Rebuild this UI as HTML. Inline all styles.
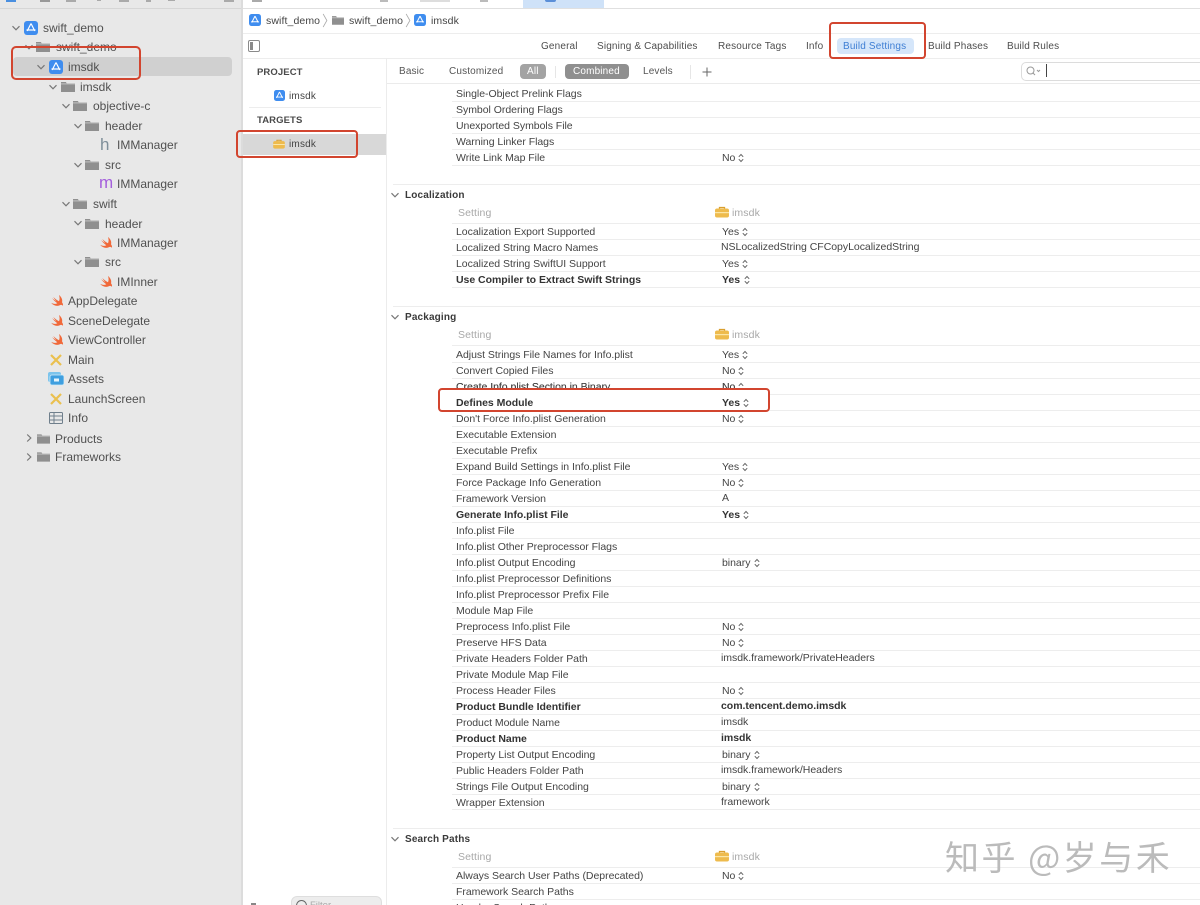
<!DOCTYPE html>
<html lang="zh">
<head>
<meta charset="utf-8">
<title>swift_demo</title>
<style>
html,body{margin:0;padding:0;background:#fff}
#p{position:relative;width:1200px;height:905px;overflow:hidden;background:#fff;font-family:"Liberation Sans","Noto Sans CJK SC",sans-serif;color:#3a3a3a}
#p div,#p span,#p svg{position:absolute}
.t,.v,.s,.n,.b{white-space:nowrap;line-height:14px;height:14px}
.s{left:456px;font-size:10.5px;letter-spacing:-.03px;color:#444}
.v{left:722px;font-size:10.5px;letter-spacing:-.03px;color:#444}
.b{font-weight:bold;color:#333}
.n{font-size:12px;letter-spacing:0;color:#505050}
.l{left:452px;right:0;height:1px;background:#ededed}
.h{left:405px;font-size:10px;font-weight:bold;letter-spacing:.15px;color:#3a3a3a;white-space:nowrap;line-height:14px}
.g{left:458px;font-size:10.5px;letter-spacing:.1px;color:#a8a8a8;line-height:14px}
.g2{left:732px;font-size:10.5px;letter-spacing:.1px;color:#a8a8a8;line-height:14px}
.tab{font-size:10px;letter-spacing:.15px;color:#4d4d4d;line-height:14px;white-space:nowrap}
.red{border:2.5px solid #d2452f;border-radius:4px;box-sizing:border-box}
.cap{font-size:9.5px;font-weight:bold;letter-spacing:.1px;color:#4a4a4a}
</style>
</head>
<body>
<div id="p">
<svg width="0" height="0" style="left:0;top:0">
<defs>
<symbol id="app" viewBox="0 0 14 14"><rect width="14" height="14" rx="3" fill="#3f8def"/><path d="M7 2.500 3.200 10M7 2.500 10.800 10M2.500 9h9" stroke="#fff" stroke-width="1.200" fill="none"/></symbol>
<symbol id="fo" viewBox="0 0 14 11"><path d="M0 1h4.800l1 1.400H14V11H0z" fill="#8f8f8f"/><rect x="0" y="2.400" width="14" height="1" fill="#c4c4c4"/></symbol>
<symbol id="sw" viewBox="0 0 14 14"><path d="M9 1C11.500 3 12.800 5.800 12 8.300C13 9.500 13.300 11 12.800 11.800C12 10.800 10.800 10.700 9.800 11.200C7 12.500 3.500 11.800 1 8.800C3 10 5.500 10.200 7.300 9.200C5.200 7.800 3.300 5.800 2 4C3.500 5.300 5.300 6.600 6.500 7.300C5 5.800 4 4.300 3.300 3C5 4.700 7.300 6.500 9 7.300C9.800 5.500 9.800 3.300 9 1Z" fill="#f0693a"/></symbol>
<symbol id="xx" viewBox="0 0 14 14"><path d="M2 2 12 12M12 2 2 12" stroke="#eac04e" stroke-width="2.200" fill="none"/></symbol>
<symbol id="cd" viewBox="0 0 10 10"><path d="M1.500 3.200 5 6.800 8.500 3.200" stroke="#777" stroke-width="1.200" fill="none"/></symbol>
<symbol id="cr" viewBox="0 0 10 10"><path d="M3.200 1.500 6.800 5 3.200 8.500" stroke="#777" stroke-width="1.200" fill="none"/></symbol>
<symbol id="tb" viewBox="0 0 14 12"><path d="M4.500 3V1.500h5V3" stroke="#d99f2f" stroke-width="1.300" fill="none"/><rect y="2.500" width="14" height="9" rx="2" fill="#eebb4d"/><rect y="6" width="14" height="1.200" fill="#fbe6a8"/></symbol>
<symbol id="ud" viewBox="0 0 6 10"><path d="M.8 3.800 3 1.500 5.200 3.800M.8 6.200 3 8.500 5.200 6.200" stroke="#666" stroke-width="1" fill="none"/></symbol>
<symbol id="br" viewBox="0 0 6 16"><path d="M1 1 5 8 1 15" stroke="#aaa" stroke-width=".9" fill="none"/></symbol>
</defs>
</svg>

<!-- sidebar -->
<div style="left:0;top:0;width:241px;height:905px;background:#e8e8e8"></div>
<div style="left:241px;top:0;width:2px;height:905px;background:#dcdcdc"></div>
<div style="left:0;top:8px;width:241px;height:1px;background:#d6d6d6"></div>
<div style="left:6px;top:0;width:10px;height:2px;background:#4a8fe0"></div>
<div style="left:40px;top:0;width:10px;height:2px;background:#999"></div>
<div style="left:66px;top:0;width:10px;height:2px;background:#aaa"></div>
<div style="left:97px;top:0;width:4px;height:1px;background:#aaa"></div>
<div style="left:119px;top:0;width:10px;height:2px;background:#aaa"></div>
<div style="left:146px;top:0;width:5px;height:2px;background:#aaa"></div>
<div style="left:168px;top:0;width:7px;height:1px;background:#aaa"></div>
<div style="left:224px;top:0;width:10px;height:2px;background:#aaa"></div>

<div style="left:13px;top:57px;width:219px;height:19px;background:#d0d0d0;border-radius:4px"></div>

<svg style="left:11px;top:23px" width="10" height="10"><use href="#cd"/></svg>
<svg style="left:24px;top:21px" width="14" height="14"><use href="#app"/></svg>
<div class="n" style="left:43px;top:21px">swift_demo</div>

<svg style="left:24px;top:42px" width="10" height="10"><use href="#cd"/></svg>
<svg style="left:36px;top:41px" width="14" height="11"><use href="#fo"/></svg>
<div class="n" style="left:56px;top:40px">swift_demo</div>

<svg style="left:36px;top:62px" width="10" height="10"><use href="#cd"/></svg>
<svg style="left:49px;top:60px" width="14" height="14"><use href="#app"/></svg>
<div class="n" style="left:68px;top:60px">imsdk</div>

<svg style="left:48px;top:82px" width="10" height="10"><use href="#cd"/></svg>
<svg style="left:61px;top:81px" width="14" height="11"><use href="#fo"/></svg>
<div class="n" style="left:80px;top:80px">imsdk</div>

<svg style="left:61px;top:101px" width="10" height="10"><use href="#cd"/></svg>
<svg style="left:73px;top:100px" width="14" height="11"><use href="#fo"/></svg>
<div class="n" style="left:93px;top:99px">objective-c</div>

<svg style="left:73px;top:121px" width="10" height="10"><use href="#cd"/></svg>
<svg style="left:85px;top:120px" width="14" height="11"><use href="#fo"/></svg>
<div class="n" style="left:105px;top:119px">header</div>

<div style="left:100px;top:136px;font-size:17px;line-height:18px;color:#7f8f9a">h</div>
<div class="n" style="left:117px;top:138px">IMManager</div>

<svg style="left:73px;top:160px" width="10" height="10"><use href="#cd"/></svg>
<svg style="left:85px;top:159px" width="14" height="11"><use href="#fo"/></svg>
<div class="n" style="left:105px;top:158px">src</div>

<div style="left:99px;top:174px;font-size:17px;line-height:18px;color:#a45fdc">m</div>
<div class="n" style="left:117px;top:177px">IMManager</div>

<svg style="left:61px;top:199px" width="10" height="10"><use href="#cd"/></svg>
<svg style="left:73px;top:198px" width="14" height="11"><use href="#fo"/></svg>
<div class="n" style="left:93px;top:197px">swift</div>

<svg style="left:73px;top:218px" width="10" height="10"><use href="#cd"/></svg>
<svg style="left:85px;top:218px" width="14" height="11"><use href="#fo"/></svg>
<div class="n" style="left:105px;top:217px">header</div>

<svg style="left:99px;top:236px" width="14" height="14"><use href="#sw"/></svg>
<div class="n" style="left:117px;top:236px">IMManager</div>

<svg style="left:73px;top:257px" width="10" height="10"><use href="#cd"/></svg>
<svg style="left:85px;top:256px" width="14" height="11"><use href="#fo"/></svg>
<div class="n" style="left:105px;top:255px">src</div>

<svg style="left:99px;top:275px" width="14" height="14"><use href="#sw"/></svg>
<div class="n" style="left:117px;top:275px">IMInner</div>

<svg style="left:50px;top:294px" width="14" height="14"><use href="#sw"/></svg>
<div class="n" style="left:68px;top:294px">AppDelegate</div>
<svg style="left:50px;top:314px" width="14" height="14"><use href="#sw"/></svg>
<div class="n" style="left:68px;top:314px">SceneDelegate</div>
<svg style="left:50px;top:333px" width="14" height="14"><use href="#sw"/></svg>
<div class="n" style="left:68px;top:333px">ViewController</div>
<svg style="left:49px;top:353px" width="14" height="14"><use href="#xx"/></svg>
<div class="n" style="left:68px;top:353px">Main</div>
<svg style="left:48px;top:372px" width="16" height="14" viewBox="0 0 16 14"><rect x="0" y="0" width="13" height="10" rx="2" fill="#7cc4ec"/><rect x="2" y="3" width="14" height="10" rx="2" fill="#3f9fdf" stroke="#cfeaf8" stroke-width=".8"/><rect x="6" y="6.500" width="5" height="3" fill="#e6f4fb"/></svg>
<div class="n" style="left:68px;top:372px">Assets</div>
<svg style="left:49px;top:392px" width="14" height="14"><use href="#xx"/></svg>
<div class="n" style="left:68px;top:392px">LaunchScreen</div>
<svg style="left:49px;top:412px" width="14" height="12" viewBox="0 0 14 12"><rect x=".5" y=".5" width="13" height="11" rx="1" fill="none" stroke="#6f7f8c"/><path d="M.5 4h13M.5 8h13M5 .5v11" stroke="#6f7f8c" fill="none"/></svg>
<div class="n" style="left:68px;top:411px">Info</div>
<svg style="left:24px;top:433px" width="10" height="10"><use href="#cr"/></svg>
<svg style="left:37px;top:433px" width="13" height="11"><use href="#fo"/></svg>
<div class="n" style="left:55px;top:432px">Products</div>
<svg style="left:24px;top:452px" width="10" height="10"><use href="#cr"/></svg>
<svg style="left:37px;top:451px" width="13" height="11"><use href="#fo"/></svg>
<div class="n" style="left:55px;top:450px">Frameworks</div>

<!-- top strips -->
<div style="left:243px;top:8px;right:0;height:1px;background:#e0e0e0"></div>
<div style="left:523px;top:0;width:81px;height:8px;background:#cfe2f8"></div>
<div style="left:545px;top:0;width:11px;height:2px;background:#5b8fd8;border-radius:0 0 2px 2px"></div>
<div style="left:252px;top:0;width:10px;height:2px;background:#aaa"></div>
<div style="left:380px;top:0;width:8px;height:2px;background:#bbb"></div>
<div style="left:420px;top:0;width:30px;height:2px;background:#ddd"></div>
<div style="left:480px;top:0;width:8px;height:2px;background:#bbb"></div>

<!-- breadcrumb -->
<svg style="left:249px;top:14px" width="12" height="12"><use href="#app"/></svg>
<div class="t" style="left:266px;top:14px;font-size:10.5px;letter-spacing:.1px;color:#444">swift_demo</div>
<svg style="left:322px;top:13px" width="6" height="15"><use href="#br"/></svg>
<svg style="left:332px;top:15px" width="12" height="10"><use href="#fo"/></svg>
<div class="t" style="left:349px;top:14px;font-size:10.5px;letter-spacing:.1px;color:#444">swift_demo</div>
<svg style="left:405px;top:13px" width="6" height="15"><use href="#br"/></svg>
<svg style="left:414px;top:14px" width="12" height="12"><use href="#app"/></svg>
<div class="t" style="left:431px;top:14px;font-size:10.5px;letter-spacing:.1px;color:#444">imsdk</div>
<div style="left:243px;top:33px;right:0;height:1px;background:#ededed"></div>

<!-- tab bar -->
<div style="left:248px;top:40px;width:10px;height:10px;border:1px solid #8a8a8a;border-radius:2px"></div>
<div style="left:250px;top:42px;width:3px;height:8px;background:#8a8a8a"></div>
<div class="tab" style="left:541px;top:40px">General</div>
<div class="tab" style="left:597px;top:40px">Signing &amp; Capabilities</div>
<div class="tab" style="left:718px;top:40px">Resource Tags</div>
<div class="tab" style="left:806px;top:40px">Info</div>
<div style="left:837px;top:38px;width:77px;height:16px;background:#d5e6fa;border-radius:4px"></div>
<div class="tab" style="left:843px;top:40px;color:#3f7fd4">Build Settings</div>
<div class="tab" style="left:928px;top:40px">Build Phases</div>
<div class="tab" style="left:1007px;top:40px">Build Rules</div>
<div style="left:243px;top:58px;right:0;height:1px;background:#ededed"></div>

<!-- project pane -->
<div style="left:386px;top:58px;width:1px;height:847px;background:#ececec"></div>
<div class="t cap" style="left:257px;top:66px">PROJECT</div>
<svg style="left:274px;top:90px" width="11" height="11"><use href="#app"/></svg>
<div class="t" style="left:289px;top:90px;font-size:10px;letter-spacing:.2px;color:#444">imsdk</div>
<div style="left:249px;top:107px;width:132px;height:1px;background:#ededed"></div>
<div class="t cap" style="left:257px;top:114px">TARGETS</div>
<div style="left:243px;top:134px;width:143px;height:21px;background:#d8d8d8"></div>
<svg style="left:273px;top:139px" width="12" height="10"><use href="#tb"/></svg>
<div class="t" style="left:289px;top:138px;font-size:10px;letter-spacing:.2px;color:#444">imsdk</div>
<div style="left:251px;top:903px;width:5px;height:2px;background:#888"></div>
<div style="left:291px;top:896px;width:89px;height:12px;background:#ededed;border:1px solid #dedede;border-radius:6px"></div>
<div style="left:296px;top:900px;width:9px;height:9px;border:1px solid #666;border-radius:50%"></div>
<div class="t" style="left:310px;top:899px;font-size:9.5px;color:#aaa">Filter</div>

<!-- filter bar -->
<div class="tab" style="left:399px;top:65px;color:#555">Basic</div>
<div class="tab" style="left:449px;top:65px;color:#555">Customized</div>
<div style="left:520px;top:64px;width:26px;height:15px;background:#a3a3a3;border-radius:4px"></div>
<div class="tab" style="left:527px;top:65px;color:#fff">All</div>
<div style="left:555px;top:66px;width:1px;height:12px;background:#e6e6e6"></div>
<div style="left:565px;top:64px;width:64px;height:15px;background:#8f8f8f;border-radius:4px"></div>
<div class="tab" style="left:573px;top:65px;color:#fff">Combined</div>
<div class="tab" style="left:643px;top:65px;color:#555">Levels</div>
<div style="left:690px;top:65px;width:1px;height:14px;background:#e6e6e6"></div>
<svg style="left:702px;top:67px" width="10" height="10"><path d="M5 .5v9M.5 5h9" stroke="#666" fill="none"/></svg>
<div style="left:1021px;top:62px;width:190px;height:17px;background:#fff;border:1px solid #dcdcdc;border-radius:5px"></div>
<svg style="left:1026px;top:66px" width="15" height="10" viewBox="0 0 15 10"><circle cx="4.500" cy="4.500" r="3.500" fill="none" stroke="#999"/><path d="M7 7l2 2M11 4l1.500 1.500L14 4" stroke="#999" fill="none"/></svg>
<div style="left:1046px;top:64px;width:1px;height:13px;background:#444"></div>
<div style="left:387px;top:83px;right:0;height:1px;background:#ebebeb"></div>

<!-- block 1 -->
<div class="s" style="top:87px">Single-Object Prelink Flags</div><div class="l" style="top:101px"></div>
<div class="s" style="top:103px">Symbol Ordering Flags</div><div class="l" style="top:117px"></div>
<div class="s" style="top:119px">Unexported Symbols File</div><div class="l" style="top:133px"></div>
<div class="s" style="top:135px">Warning Linker Flags</div><div class="l" style="top:149px"></div>
<div class="s" style="top:151px">Write Link Map File</div><div class="v" style="top:151px">No</div><svg style="left:738px;top:153px" width="6" height="10"><use href="#ud"/></svg><div class="l" style="top:165px"></div>

<!-- Localization -->
<div style="left:393px;top:184px;right:0;height:1px;background:#ededed"></div>
<svg style="left:390px;top:190px" width="10" height="10"><use href="#cd"/></svg>
<div class="h" style="top:189px">Localization</div>
<div class="g" style="top:206px">Setting</div>
<svg style="left:715px;top:206px" width="14" height="12"><use href="#tb"/></svg>
<div class="g2" style="top:206px">imsdk</div>
<div class="l" style="top:223px"></div>
<div class="s" style="top:225px">Localization Export Supported</div><div class="v" style="top:225px">Yes</div><svg style="left:742px;top:227px" width="6" height="10"><use href="#ud"/></svg><div class="l" style="top:239px"></div>
<div class="s" style="top:241px">Localized String Macro Names</div><div class="v" style="top:240px;left:721px">NSLocalizedString CFCopyLocalizedString</div><div class="l" style="top:255px"></div>
<div class="s" style="top:257px">Localized String SwiftUI Support</div><div class="v" style="top:257px">Yes</div><svg style="left:742px;top:259px" width="6" height="10"><use href="#ud"/></svg><div class="l" style="top:271px"></div>
<div class="s b" style="top:273px">Use Compiler to Extract Swift Strings</div><div class="v b" style="top:273px">Yes</div><svg style="left:744px;top:275px" width="6" height="10"><use href="#ud"/></svg><div class="l" style="top:287px"></div>

<!-- Packaging -->
<div style="left:393px;top:306px;right:0;height:1px;background:#ededed"></div>
<svg style="left:390px;top:312px" width="10" height="10"><use href="#cd"/></svg>
<div class="h" style="top:311px">Packaging</div>
<div class="g" style="top:328px">Setting</div>
<svg style="left:715px;top:328px" width="14" height="12"><use href="#tb"/></svg>
<div class="g2" style="top:328px">imsdk</div>
<div class="l" style="top:345px"></div>
<div class="s" style="top:348px">Adjust Strings File Names for Info.plist</div><div class="v" style="top:348px">Yes</div><svg style="left:742px;top:350px" width="6" height="10"><use href="#ud"/></svg><div class="l" style="top:362px"></div>
<div class="s" style="top:364px">Convert Copied Files</div><div class="v" style="top:364px">No</div><svg style="left:738px;top:366px" width="6" height="10"><use href="#ud"/></svg><div class="l" style="top:378px"></div>
<div class="s" style="top:380px">Create Info.plist Section in Binary</div><div class="v" style="top:380px">No</div><svg style="left:738px;top:382px" width="6" height="10"><use href="#ud"/></svg><div class="l" style="top:394px"></div>
<div class="s b" style="top:396px">Defines Module</div><div class="v b" style="top:396px">Yes</div><svg style="left:743px;top:398px" width="6" height="10"><use href="#ud"/></svg><div class="l" style="top:410px"></div>
<div class="s" style="top:412px">Don't Force Info.plist Generation</div><div class="v" style="top:412px">No</div><svg style="left:738px;top:414px" width="6" height="10"><use href="#ud"/></svg><div class="l" style="top:426px"></div>
<div class="s" style="top:428px">Executable Extension</div><div class="l" style="top:442px"></div>
<div class="s" style="top:444px">Executable Prefix</div><div class="l" style="top:458px"></div>
<div class="s" style="top:460px">Expand Build Settings in Info.plist File</div><div class="v" style="top:460px">Yes</div><svg style="left:742px;top:462px" width="6" height="10"><use href="#ud"/></svg><div class="l" style="top:474px"></div>
<div class="s" style="top:476px">Force Package Info Generation</div><div class="v" style="top:476px">No</div><svg style="left:738px;top:478px" width="6" height="10"><use href="#ud"/></svg><div class="l" style="top:490px"></div>
<div class="s" style="top:492px">Framework Version</div><div class="v" style="top:491px">A</div><div class="l" style="top:506px"></div>
<div class="s b" style="top:508px">Generate Info.plist File</div><div class="v b" style="top:508px">Yes</div><svg style="left:743px;top:510px" width="6" height="10"><use href="#ud"/></svg><div class="l" style="top:522px"></div>
<div class="s" style="top:524px">Info.plist File</div><div class="l" style="top:538px"></div>
<div class="s" style="top:540px">Info.plist Other Preprocessor Flags</div><div class="l" style="top:554px"></div>
<div class="s" style="top:556px">Info.plist Output Encoding</div><div class="v" style="top:556px">binary</div><svg style="left:754px;top:558px" width="6" height="10"><use href="#ud"/></svg><div class="l" style="top:570px"></div>
<div class="s" style="top:572px">Info.plist Preprocessor Definitions</div><div class="l" style="top:586px"></div>
<div class="s" style="top:588px">Info.plist Preprocessor Prefix File</div><div class="l" style="top:602px"></div>
<div class="s" style="top:604px">Module Map File</div><div class="l" style="top:618px"></div>
<div class="s" style="top:620px">Preprocess Info.plist File</div><div class="v" style="top:620px">No</div><svg style="left:738px;top:622px" width="6" height="10"><use href="#ud"/></svg><div class="l" style="top:634px"></div>
<div class="s" style="top:636px">Preserve HFS Data</div><div class="v" style="top:636px">No</div><svg style="left:738px;top:638px" width="6" height="10"><use href="#ud"/></svg><div class="l" style="top:650px"></div>
<div class="s" style="top:652px">Private Headers Folder Path</div><div class="v" style="top:651px;left:721px">imsdk.framework/PrivateHeaders</div><div class="l" style="top:666px"></div>
<div class="s" style="top:668px">Private Module Map File</div><div class="l" style="top:682px"></div>
<div class="s" style="top:684px">Process Header Files</div><div class="v" style="top:684px">No</div><svg style="left:738px;top:686px" width="6" height="10"><use href="#ud"/></svg><div class="l" style="top:698px"></div>
<div class="s b" style="top:700px">Product Bundle Identifier</div><div class="v b" style="top:699px;left:721px">com.tencent.demo.imsdk</div><div class="l" style="top:714px"></div>
<div class="s" style="top:716px">Product Module Name</div><div class="v" style="top:715px;left:721px">imsdk</div><div class="l" style="top:730px"></div>
<div class="s b" style="top:732px">Product Name</div><div class="v b" style="top:731px;left:721px">imsdk</div><div class="l" style="top:746px"></div>
<div class="s" style="top:748px">Property List Output Encoding</div><div class="v" style="top:748px">binary</div><svg style="left:754px;top:750px" width="6" height="10"><use href="#ud"/></svg><div class="l" style="top:762px"></div>
<div class="s" style="top:764px">Public Headers Folder Path</div><div class="v" style="top:763px;left:721px">imsdk.framework/Headers</div><div class="l" style="top:778px"></div>
<div class="s" style="top:780px">Strings File Output Encoding</div><div class="v" style="top:780px">binary</div><svg style="left:754px;top:782px" width="6" height="10"><use href="#ud"/></svg><div class="l" style="top:794px"></div>
<div class="s" style="top:796px">Wrapper Extension</div><div class="v" style="top:795px;left:721px">framework</div><div class="l" style="top:809px"></div>

<!-- Search Paths -->
<div style="left:393px;top:828px;right:0;height:1px;background:#ededed"></div>
<svg style="left:390px;top:834px" width="10" height="10"><use href="#cd"/></svg>
<div class="h" style="top:833px">Search Paths</div>
<div class="g" style="top:850px">Setting</div>
<svg style="left:715px;top:850px" width="14" height="12"><use href="#tb"/></svg>
<div class="g2" style="top:850px">imsdk</div>
<div class="l" style="top:867px"></div>
<div class="s" style="top:869px">Always Search User Paths (Deprecated)</div><div class="v" style="top:869px">No</div><svg style="left:738px;top:871px" width="6" height="10"><use href="#ud"/></svg><div class="l" style="top:883px"></div>
<div class="s" style="top:885px">Framework Search Paths</div><div class="l" style="top:899px"></div>
<div class="s" style="top:901px">Header Search Paths</div>

<!-- red annotations -->
<div class="red" style="left:11px;top:46px;width:130px;height:34px;border-width:2.5px;border-radius:5px"></div>
<div class="red" style="left:236px;top:130px;width:122px;height:28px"></div>
<div class="red" style="left:829px;top:22px;width:97px;height:37px"></div>
<div class="red" style="left:438px;top:388px;width:332px;height:24px;background:#fff"></div>
<div class="s b" style="top:396px">Defines Module</div><div class="v b" style="top:396px">Yes</div><svg style="left:743px;top:398px" width="6" height="10"><use href="#ud"/></svg>
<div class="s" style="top:380px;height:8px;overflow:hidden">Create Info.plist Section in Binary</div>
<div class="v" style="top:380px;height:8px;overflow:hidden">No</div>

<!-- watermark -->
<div style="left:945px;top:835px;font-size:34px;line-height:42px;letter-spacing:2.500px;font-weight:400;color:#bbb;white-space:nowrap;font-family:'Noto Sans CJK SC',sans-serif">知乎 @岁与禾</div>
</div>
</body>
</html>
